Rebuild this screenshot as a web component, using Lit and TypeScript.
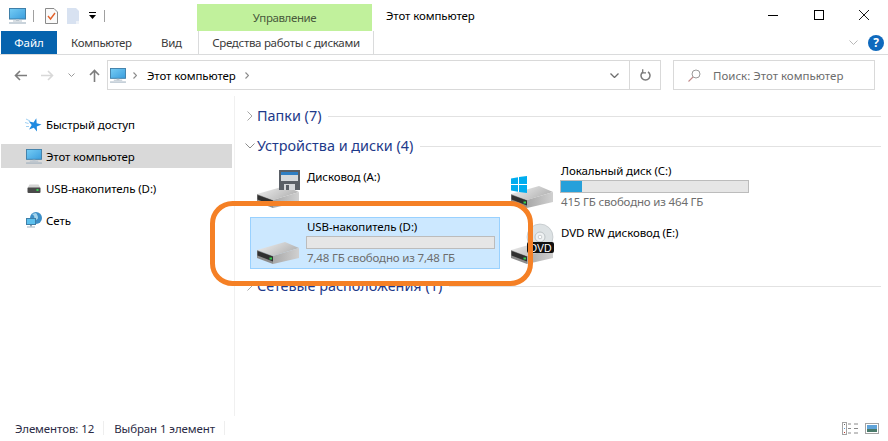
import { LitElement, html, css, svg } from "lit";
import { customElement } from "lit/decorators.js";

const monitor = (w = 17, h = 16) => html`<svg width=${w} height=${h} viewBox="0 0 17 16">
  <defs><linearGradient id="scr" x1="0" y1="0" x2="1" y2="1"><stop offset="0" stop-color="#76cdf5"/><stop offset="1" stop-color="#3a9ddd"/></linearGradient></defs>
  <rect x="0.5" y="0.5" width="16" height="10.5" fill="url(#scr)" stroke="#3f7fa8"/>
  <rect x="7" y="11.5" width="3" height="1.5" fill="#c3ccd3"/>
  <rect x="4" y="12.5" width="9" height="1" fill="#b4c0ca"/>
  <rect x="0" y="14.5" width="17" height="1" fill="#94a8b8"/>
</svg>`;

const drive = svg`
  <defs>
    <linearGradient id="dtop" x1="0" y1="0" x2="1" y2="0.5"><stop offset="0" stop-color="#f2f2f2"/><stop offset="1" stop-color="#b4b4b4"/></linearGradient>
    <linearGradient id="dside" x1="0" y1="0" x2="1" y2="0"><stop offset="0" stop-color="#a8a8a8"/><stop offset="1" stop-color="#d0d0d0"/></linearGradient>
  </defs>
  <polygon points="7,33 35,25 49,31 23,39" fill="url(#dtop)"/>
  <polygon points="7,33 23,39 23,47 7,41" fill="#8c8c8c"/>
  <polygon points="7.500,34 23,39.500 23,44.500 7.500,38.500" fill="#303030"/>
  <polygon points="23,39 49,31 49,41 23,47" fill="url(#dside)"/>
  <rect x="19.500" y="40.500" width="2.500" height="2" fill="#35d04f"/>`;

const floppy = svg`
  <rect x="29" y="9" width="21" height="20" fill="#5a5f66"/>
  <rect x="31" y="11" width="17" height="9" fill="#d6d9dc"/>
  <rect x="31" y="11" width="17" height="3" fill="#2f7fc4"/>
  <rect x="34" y="23" width="11" height="6" fill="#d5d7da"/>
  <rect x="36" y="24" width="3" height="5" fill="#5a5f66"/>`;

const win = svg`
  <polygon points="7,17.500 14,16.200 14,23 7,23" fill="#00adef"/>
  <polygon points="15,16 23,15 23,23 15,23" fill="#00adef"/>
  <polygon points="7,24 14,24 14,30.800 7,29.500" fill="#00adef"/>
  <polygon points="15,24 23,24 23,32 15,31" fill="#00adef"/>`;

const dvd = svg`
  <circle cx="36" cy="20" r="13" fill="#dde2e4" stroke="#b4babd" stroke-width="0.600"/>
  <circle cx="36" cy="20" r="5" fill="#eef1f2" stroke="#bcc2c5"/>
  <circle cx="36" cy="20" r="1.800" fill="#fff" stroke="#aab0b4" stroke-width="0.600"/>
  <rect x="23" y="25" width="27" height="11" rx="2" fill="#111"/>
  <text x="36.500" y="34.500" text-anchor="middle" font-family="Liberation Sans, sans-serif" font-size="10.500" fill="#fff">DVD</text>`;

const tiles = [
  { name: "Дисковод (A:)", overlay: floppy, plain: true },
  { name: "Локальный диск (C:)", overlay: win, used: 11, free: "415 ГБ свободно из 464 ГБ" },
  { name: "USB-накопитель (D:)", overlay: null, used: 0, free: "7,48 ГБ свободно из 7,48 ГБ", selected: true },
  { name: "DVD RW дисковод (E:)", overlay: dvd, plain: true },
];

@customElement("app-root")
export class AppRoot extends LitElement {
  static styles = css`
    :host { display: block; width: 888px; height: 441px; position: relative; overflow: hidden; background: #fff;
      font-family: "Noto Sans", sans-serif; font-size: 11.5px; letter-spacing: -0.1px; color: #1a1a1a; }
    svg { display: block; flex: none; }
    .page { display: flex; flex-direction: column; height: 441px; }

    .title { display: flex; height: 31px; flex: none; }
    .qat { width: 197px; display: flex; align-items: center; padding-left: 9px; box-sizing: border-box; }
    .qat .sep { width: 1px; height: 12px; background: #a0a0a0; margin: 0 11px 0 7px; }
    .qat .file-ic { margin-left: 9px; }
    .qat .dd-ic { margin-left: 8px; }
    .manage { width: 175px; margin-top: 4px; background: #c1f19c; display: flex; align-items: center; justify-content: center; color: #4a5a3c; letter-spacing: -0.4px; }
    .wintitle { margin-left: 14px; color: #000; line-height: 31px; flex: 1; padding-bottom: 1px; box-sizing: border-box; }
    .controls { display: flex; width: 120px; padding-right: 19px; box-sizing: border-box; justify-content: space-between; align-items: center; padding-bottom: 1px; }

    .tabs { display: flex; height: 24px; flex: none; border-bottom: 1px solid #dadbdc; padding-left: 1px; box-sizing: border-box; align-items: stretch; letter-spacing: -0.3px; }
    .tab { display: flex; align-items: center; color: #3b3b3b; }
    .file { width: 56px; background: #0563ae; color: #fff; justify-content: center; margin-right: 14px; letter-spacing: 0; }
    .comp { width: 90px; }
    .view { width: 37px; }
    .tool { width: 174px; border: 1px solid #dadbdc; border-width: 0 1px; justify-content: center; background: #fff; }
    .spacer { flex: 1; }
    .ribbonright { display: flex; align-items: center; gap: 10px; padding-right: 4px; }
    .help { width: 16px; height: 16px; border-radius: 50%; background: #0f69bd; color: #fff; font-weight: 700; font-size: 12px; line-height: 16px; text-align: center; }

    .addr { display: flex; height: 41px; flex: none; align-items: flex-start; padding: 5px 13px 0 14px; box-sizing: border-box; }
    .navbtns { width: 93px; height: 30px; display: flex; align-items: center; justify-content: space-between; box-sizing: border-box; padding-right: 7px; }
    .bar { width: 554px; height: 30px; border: 1px solid #d9d9d9; box-sizing: border-box; display: flex; align-items: center; padding-left: 2px; color: #000; }
    .bar .path { flex: 1; display: flex; align-items: center; gap: 7px; }
    .bar .path .lbl { margin-left: 3px; }
    .bar .path .after { margin-left: 2px; }
    .bar .dd { width: 30px; display: flex; justify-content: center; }
    .bar .rf { width: 30px; height: 28px; border-left: 1px solid #d9d9d9; display: flex; justify-content: center; align-items: center; }
    .search { width: 202px; height: 30px; margin-left: 12px; border: 1px solid #d9d9d9; box-sizing: border-box; display: flex; align-items: center; padding-left: 14px; gap: 12px; color: #6d6d6d; letter-spacing: 0; }

    .main { flex: 1; display: flex; min-height: 0; }
    .nav { width: 235px; border-right: 1px solid #f0f0f0; box-sizing: border-box; padding: 16px 0 0 1px; flex: none; display: flex; flex-direction: column; gap: 8px; }
    .item { height: 24px; width: 231px; display: flex; align-items: center; padding-left: 24px; box-sizing: border-box; gap: 4px; color: #000; }
    .item .ic { width: 17px; display: flex; justify-content: center; }
    .item.on { background: #d9d9d9; }

    .content { flex: 1; padding: 10px 7px 0 8px; box-sizing: border-box; min-width: 0; }
    .head { height: 20px; display: flex; align-items: center; color: #1e3a8a; font-size: 14.4px; letter-spacing: 0; }
    .head .chev { width: 14px; display: flex; justify-content: center; flex: none; }
    .head .t { padding-bottom: 2px; }
    .head .line { flex: 1; height: 1px; background: #e2e2e2; margin-left: 7px; }
    .gap10 { margin-top: 10px; }
    .grid { display: grid; grid-template-columns: 250px 250px; grid-auto-rows: 52px; gap: 4px; margin: 5px 0 7px 7px; }
    .tile { display: flex; box-sizing: border-box; border: 1px solid transparent; }
    .tile.sel { background: #cce8ff; border-color: #99d1ff; }
    .tile svg { margin: -1px 0 0 -1px; }
    .tt { flex: none; width: 190px; display: flex; flex-direction: column; color: #000; line-height: 16px; padding-top: 1px; }
    .tt.plain { padding-top: 7px; }
    .meter { height: 13px; border: 1px solid #bcbcbc; background: #e6e6e6; box-sizing: border-box; margin: 1px 0 0 -1px; width: 189px; }
    .meter i { display: block; height: 100%; background: #26a0da; }
    .free { color: #6d6d6d; line-height: 17px; letter-spacing: -0.17px; }

    .status { height: 25px; flex: none; display: flex; align-items: center; padding: 0 9px 1px 15px; color: #2b2b45; box-sizing: border-box; }
    .status .div { width: 1px; height: 14px; background: #eeeeee; margin-left: 9px; }
    .status .lbl2 { margin-left: 10px; }
    .status .views { margin-left: auto; display: flex; gap: 7px; align-items: center; }

    .ring { position: absolute; left: 0; top: 0; pointer-events: none; }
  `;

  render() {
    const chevRight = html`<svg width="6" height="10" viewBox="0 0 6 10"><path d="M0.500 0.500L5 5L0.500 9.500" fill="none" stroke="#a6a6a6"/></svg>`;
    const small = html`<svg width="4" height="7" viewBox="0 0 4 7"><path d="M0.500 0.500L3.500 3.500L0.500 6.500" fill="none" stroke="#8c8c8c" stroke-width="1.200"/></svg>`;
    return html`<div class="page">
      <div class="title">
        <div class="qat">
          ${monitor(17, 16)}
          <span class="sep"></span>
          <svg width="13" height="16" viewBox="0 0 13 16"><path d="M0.500 0.500H9L12.500 4V15.500H0.500z" fill="#fafafa" stroke="#8a8a8a"/><path d="M3 8l2.500 3L10 5" fill="none" stroke="#e2622c" stroke-width="1.400"/></svg>
          <svg class="file-ic" width="13" height="16" viewBox="0 0 13 16"><path d="M0 0h9l3 3v13H0z" fill="#d8e2f1"/><path d="M9 13h3v3H9z" fill="#eef2f8"/></svg>
          <svg class="dd-ic" width="9" height="8" viewBox="0 0 9 8"><rect x="1" y="0" width="7" height="1" fill="#000"/><path d="M1 3h7L4.500 7z" fill="#000"/></svg>
          <span class="sep"></span>
        </div>
        <div class="manage"><span>Управление</span></div>
        <div class="wintitle">Этот компьютер</div>
        <div class="controls">
          <svg width="10" height="1"><rect width="10" height="1" fill="#000"/></svg>
          <svg width="10" height="10"><rect x="0.500" y="0.500" width="9" height="9" fill="none" stroke="#000"/></svg>
          <svg width="10" height="10" viewBox="0 0 10 10"><path d="M0 0l10 10M10 0L0 10" stroke="#000" stroke-width="0.900"/></svg>
        </div>
      </div>
      <div class="tabs">
        <div class="tab file">Файл</div>
        <div class="tab comp">Компьютер</div>
        <div class="tab view">Вид</div>
        <div class="tab tool">Средства работы с дисками</div>
        <div class="spacer"></div>
        <div class="ribbonright">
          <svg width="9" height="5" viewBox="0 0 9 5"><path d="M0.500 0.500L4.500 4.500L8.500 0.500" fill="none" stroke="#b8b8b8"/></svg>
          <div class="help">?</div>
        </div>
      </div>
      <div class="addr">
        <div class="navbtns">
          <svg width="13" height="11" viewBox="0 0 13 11"><path d="M13 5.500H1.500M6 1L1.500 5.500L6 10" fill="none" stroke="#7d7d7d" stroke-width="1.600"/></svg>
          <svg width="13" height="11" viewBox="0 0 13 11"><path d="M0 5.500H11.500M7 1l4.500 4.500L7 10" fill="none" stroke="#d8d8d8" stroke-width="1.600"/></svg>
          <svg width="7" height="4" viewBox="0 0 7 4"><path d="M0.500 0.500L3.500 3.500L6.500 0.500" fill="none" stroke="#9a9a9a"/></svg>
          <svg width="11" height="13" viewBox="0 0 11 13"><path d="M5.500 13V1.500M1 6l4.500-4.500L10 6" fill="none" stroke="#7d7d7d" stroke-width="1.600"/></svg>
        </div>
        <div class="bar">
          <div class="path">
            ${monitor(16, 15)}
            ${small}
            <span class="lbl">Этот компьютер</span>
            <span class="after">${small}</span>
          </div>
          <div class="dd"><svg width="9" height="5" viewBox="0 0 9 5"><path d="M0.500 0.500L4.500 4.500L8.500 0.500" fill="none" stroke="#6d6d6d" stroke-width="1.300"/></svg></div>
          <div class="rf"><svg width="11" height="12" viewBox="0 0 11 12"><path d="M3 2.800A4.500 4.500 0 1 0 8 2.800" fill="none" stroke="#7a7a7a" stroke-width="1.500"/><path d="M2.700 0.300V3.800H6" fill="none" stroke="#7a7a7a" stroke-width="1.300"/></svg></div>
        </div>
        <div class="search">
          <svg width="13" height="13" viewBox="0 0 13 13"><circle cx="8" cy="5" r="4" fill="none" stroke="#9a9a9a"/><path d="M5 8L0.500 12.500" stroke="#c28a8a" stroke-width="1.100"/></svg>
          <span>Поиск: Этот компьютер</span>
        </div>
      </div>
      <div class="main">
        <div class="nav">
          <div class="item"><span class="ic"><svg width="17" height="17" viewBox="0 0 17 17"><path d="M11.300 2.200L11.700 7.200L16.500 8.600L11.800 10.500L12 15.500L8.800 11.700L4.100 13.400L6.700 9.100L3.600 5.200L8.500 6.400z" fill="#1f8ae0"/><path d="M1 3L5 5M0 6.500L3.500 7.500M1 10.500H4" stroke="#9fd0f2"/></svg></span>Быстрый доступ</div>
          <div class="item on"><span class="ic">${monitor(16, 15)}</span>Этот компьютер</div>
          <div class="item"><span class="ic"><svg width="14" height="9" viewBox="0 0 14 9"><path d="M0.500 4L2.500 0.500H11.500L13.500 4z" fill="#d4d4d4"/><rect x="0.500" y="3.500" width="13" height="5.500" rx="1" fill="#4a4a4a"/><rect x="9.500" y="5" width="2" height="2" fill="#39d353"/></svg></span>USB-накопитель (D:)</div>
          <div class="item"><span class="ic"><svg width="16" height="16" viewBox="0 0 16 16"><circle cx="10" cy="6" r="6" fill="#3e8fc7"/><path d="M6 2c2 1 3 3 2 5s4 1 4-1-1-4-2-5z" fill="#a5d3ea"/><rect x="0.500" y="6.500" width="9" height="6" fill="#5cc0ee" stroke="#3f7fa8"/><rect x="4" y="13" width="2" height="1.500" fill="#8da3b3"/><rect x="1" y="14.500" width="8" height="1" fill="#9fb1bf"/></svg></span>Сеть</div>
        </div>
        <div class="content">
          <div class="head">
            <span class="chev">${chevRight}</span>
            <span class="t">Папки (7)</span><span class="line"></span>
          </div>
          <div class="head gap10">
            <span class="chev"><svg width="10" height="6" viewBox="0 0 10 6"><path d="M0.500 0.500L5 5L9.500 0.500" fill="none" stroke="#8c8c8c"/></svg></span>
            <span class="t">Устройства и диски (4)</span><span class="line"></span>
          </div>
          <div class="grid">
            ${tiles.map((t) => html`<div class="tile ${t.selected ? "sel" : ""}">
              <svg width="57" height="52" viewBox="0 0 57 52">${drive}${t.overlay}</svg>
              <div class="tt ${t.plain ? "plain" : ""}">
                <span>${t.name}</span>
                ${t.plain ? "" : html`<div class="meter"><i style="width:${t.used}%"></i></div><span class="free">${t.free}</span>`}
              </div>
            </div>`)}
          </div>
          <div class="head">
            <span class="chev">${chevRight}</span>
            <span class="t">Сетевые расположения (1)</span><span class="line"></span>
          </div>
        </div>
      </div>
      <div class="status">
        <span>Элементов: 12</span>
        <span class="div"></span>
        <span class="lbl2">Выбран 1 элемент</span>
        <span class="div"></span>
        <div class="views">
          <svg width="16" height="13" viewBox="0 0 16 13"><rect x="0.500" y="0.500" width="4" height="12" fill="#fff" stroke="#a3a3a3"/><rect x="2" y="2" width="1" height="1" fill="#666"/><rect x="2" y="6" width="1" height="1" fill="#5b9bd5"/><rect x="2" y="10" width="1" height="1" fill="#c0392b"/><path d="M6 2h3M12 2h4M6 6.500h3M12 6.500h4M6 11h3M12 11h4" stroke="#8a8a8a"/></svg>
          <svg width="14" height="11" viewBox="0 0 14 11"><rect x="0.500" y="0.500" width="13" height="10" fill="#fff" stroke="#a3a3a3"/><rect x="2" y="2" width="10" height="7" fill="#5fa3d8"/><rect x="2" y="6" width="10" height="3" fill="#4a7a6a"/></svg>
        </div>
      </div>
    </div>
    <svg class="ring" width="888" height="441"><rect x="212.500" y="203.500" width="318" height="80" rx="20" fill="none" stroke="#f58025" stroke-width="5"/></svg>`;
  }
}
